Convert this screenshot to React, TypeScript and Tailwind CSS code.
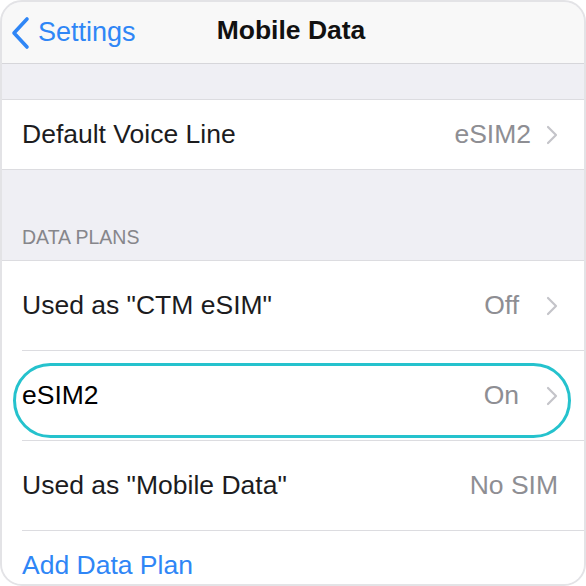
import React from "react";

function Chevron() {
  return (
    <svg width="12" height="20" viewBox="0 0 12 20" className="ml-[15px]">
      <polyline points="2,2 10,10 2,18" fill="none" stroke="#c4c4c9" strokeWidth="2.2" strokeLinecap="round" strokeLinejoin="round" />
    </svg>
  );
}

function Row({ label, value, chevron = true, last = false, dark = false, wide = false }: { label: string; value?: string; chevron?: boolean; last?: boolean; dark?: boolean; wide?: boolean }) {
  return (
    <div className="h-[90px] pl-5 flex flex-col">
      <div className="flex-1 flex items-center pr-[26px]">
        <span className={`text-[26.5px] ${dark ? "text-black" : "text-[#1c1c1e]"}`}>{label}</span>
        <span className={`ml-auto text-[26.5px] text-[#8e8e93] ${wide ? "mr-[12px]" : ""}`}>{value}</span>
        {chevron && <Chevron />}
      </div>
      {!last && <div className="h-px bg-[#dcdce0]" />}
    </div>
  );
}

export default function App() {
  return (
    <div className="w-[586px] h-[586px] bg-white" style={{ fontFamily: '"Liberation Sans", Arial, sans-serif' }}>
      <div className="h-full rounded-[22px] border-2 border-[#e3e3e6] overflow-hidden bg-[#efeff4] flex flex-col">
        <div className="h-[62px] shrink-0 bg-[#f8f8f8] border-b border-[#d6d6da] relative flex items-center justify-center">
          <div className="absolute left-[8px] top-[12px] flex items-center">
            <svg width="22" height="34" viewBox="0 0 22 34">
              <polyline points="17,3 4,17 17,31" fill="none" stroke="#2f86f6" strokeWidth="3.6" strokeLinecap="round" strokeLinejoin="round" />
            </svg>
            <span className="text-[27px] text-[#2f86f6] ml-[6px] -mt-[2px]">Settings</span>
          </div>
          <span className="text-[26.5px] font-bold text-[#111] -mt-[3px] -ml-[4px]">Mobile Data</span>
        </div>

        <div className="h-[35px] shrink-0" />

        <div className="h-[71px] shrink-0 bg-white border-y border-[#dcdce0] pl-5 pr-[26px] flex items-center">
          <span className="text-[26.5px] text-[#1c1c1e]">Default Voice Line</span>
          <span className="ml-auto text-[26.5px] text-[#8e8e93]">eSIM2</span>
          <Chevron />
        </div>

        <div className="h-[90px] shrink-0 flex items-end pl-5 pb-[8px]">
          <span className="text-[19.5px] text-[#86868b]">DATA PLANS</span>
        </div>

        <div className="flex-1 bg-white border-t border-[#dcdce0]">
          <Row label={'Used as "CTM eSIM"'} value="Off" wide />
          <div className="relative">
            <Row label="eSIM2" value="On" dark wide />
            <div className="absolute left-[11px] right-[13px] top-[12px] bottom-[3px] rounded-[38px] border-[3px] border-[#25c2cd]" />
          </div>
          <Row label={'Used as "Mobile Data"'} value="No SIM" chevron={false} />
          <div className="h-[58px] pl-5 pt-[12px] flex items-center">
            <span className="text-[26.5px] text-[#2f86f6]">Add Data Plan</span>
          </div>
        </div>
      </div>
    </div>
  );
}
